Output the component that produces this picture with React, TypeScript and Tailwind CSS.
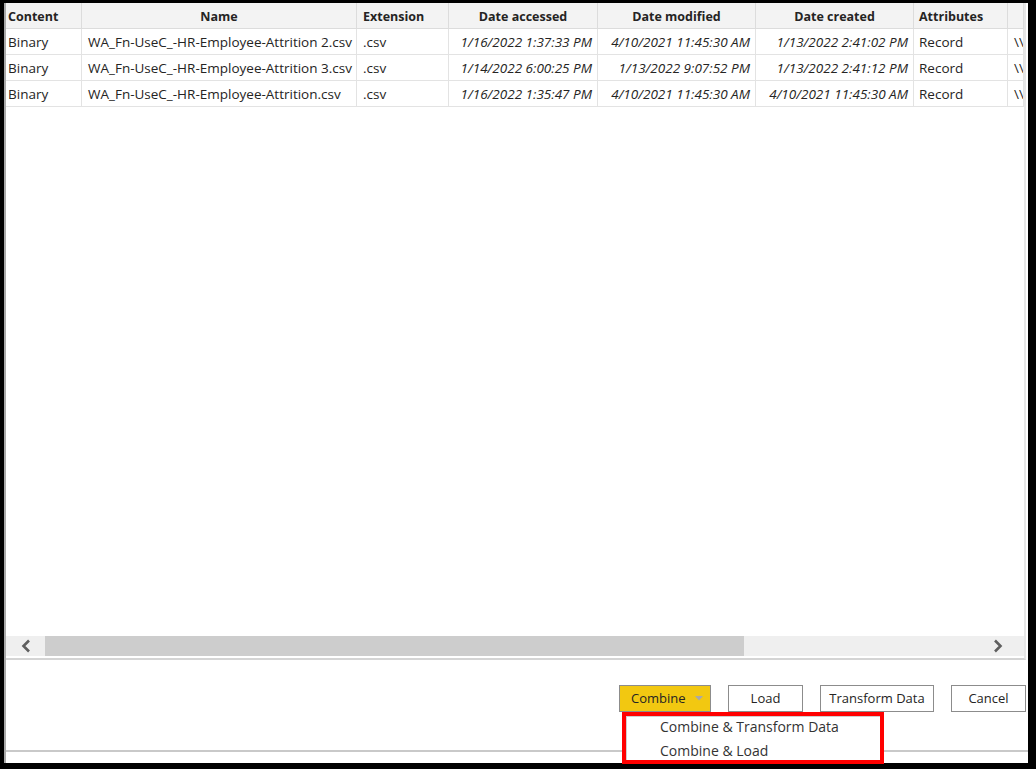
import React from "react";

const cols = [
  { w: "w-[76px]", label: "Content", head: "text-left pl-[2px]" },
  { w: "w-[275px]", label: "Name", head: "text-center" },
  { w: "w-[92px]", label: "Extension", head: "text-left pl-[6px]" },
  { w: "w-[149px]", label: "Date accessed", head: "text-center" },
  { w: "w-[158px]", label: "Date modified", head: "text-center" },
  { w: "w-[158px]", label: "Date created", head: "text-center" },
  { w: "w-[94px]", label: "Attributes", head: "text-left pl-[5px]" },
  { w: "w-[16px]", label: "", head: "" },
];

const rows = [
  ["Binary", "WA_Fn-UseC_-HR-Employee-Attrition 2.csv", ".csv", "1/16/2022 1:37:33 PM", "4/10/2021 11:45:30 AM", "1/13/2022 2:41:02 PM", "Record", "\\\\"],
  ["Binary", "WA_Fn-UseC_-HR-Employee-Attrition 3.csv", ".csv", "1/14/2022 6:00:25 PM", "1/13/2022 9:07:52 PM", "1/13/2022 2:41:12 PM", "Record", "\\\\"],
  ["Binary", "WA_Fn-UseC_-HR-Employee-Attrition.csv", ".csv", "1/16/2022 1:35:47 PM", "4/10/2021 11:45:30 AM", "4/10/2021 11:45:30 AM", "Record", "\\\\"],
];

const cellAlign = [
  "text-left pl-[2px]",
  "text-left pl-[6px]",
  "text-left pl-[6px]",
  "text-right pr-[5px] italic",
  "text-right pr-[5px] italic",
  "text-right pr-[5px] italic",
  "text-left pl-[5px]",
  "text-left pl-[6px]",
];

function Chevron({ dir }: { dir: "left" | "right" }) {
  return (
    <svg width="12" height="14" viewBox="0 0 12 14">
      <path
        d={dir === "left" ? "M9 1.5 L3.5 7 L9 12.5" : "M3 1.5 L8.5 7 L3 12.5"}
        fill="none"
        stroke="#5f5f5f"
        strokeWidth="2.6"
      />
    </svg>
  );
}

export default function App() {
  return (
    <div className="w-[1036px] h-[769px] bg-black pt-[3px] pl-[4px] pr-[8px] pb-[6px] font-['Open_Sans',sans-serif] text-[#252423]">
      <div className="h-full flex flex-col bg-white border-l-2 border-[#a9a9a9] relative">
        {/* data panel */}
        <div className="h-[657px] flex flex-col border-b-2 border-[#d4d4d4] border-r-2 border-r-[#e6e6e6] mr-[2px]">
          <div className="flex-1 overflow-hidden">
            <div className="flex h-[26px] bg-[#f3f3f3] border-b border-[#dcdcdc]">
              {cols.map((c, i) => (
                <div
                  key={i}
                  className={`${c.w} shrink-0 ${c.head} border-r border-[#dcdcdc] text-[12.5px] font-bold pt-[1px] leading-[25px] whitespace-nowrap overflow-hidden`}
                >
                  {c.label}
                </div>
              ))}
            </div>
            {rows.map((r, ri) => (
              <div key={ri} className="flex h-[26px] border-b border-[#e3e3e3]">
                {r.map((v, ci) => (
                  <div
                    key={ci}
                    className={`${cols[ci].w} shrink-0 ${cellAlign[ci]} border-r border-[#e3e3e3] text-[13.5px] pt-[1px] leading-[25px] whitespace-nowrap overflow-hidden`}
                  >
                    {v}
                  </div>
                ))}
              </div>
            ))}
          </div>
          {/* horizontal scrollbar */}
          <div className="h-[20px] mb-[2px] flex bg-[#efefef]">
            <div className="w-[39px] flex items-center justify-center">
              <Chevron dir="left" />
            </div>
            <div className="w-[699px] bg-[#cdcdcd]" />
            <div className="flex-1" />
            <div className="w-[52px] flex items-center justify-center">
              <Chevron dir="right" />
            </div>
          </div>
        </div>

        {/* buttons */}
        <div className="mt-[25px] flex justify-end gap-[17px] pr-[2px] text-[13px]">
          <div className="w-[92px] h-[27px] bg-[#f2c811] border border-[#8c8c8c] flex items-center pl-[11px] gap-[9px]">
            <span>Combine</span>
            <svg width="8" height="5" viewBox="0 0 8 5">
              <path d="M0 0 L8 0 L4 4.5 Z" fill="#a8a8a8" />
            </svg>
          </div>
          <div className="w-[75px] h-[27px] border border-[#8c8c8c] flex items-center justify-center">Load</div>
          <div className="w-[114px] h-[27px] border border-[#8c8c8c] flex items-center justify-center">Transform Data</div>
          <div className="w-[75px] h-[27px] border border-[#8c8c8c] flex items-center justify-center">Cancel</div>
        </div>

        <div className="flex-1" />
        <div className="h-[2px] bg-[#c9c9c9]" />
        <div className="h-[11px]" />

        {/* dropdown menu */}
        <div className="absolute left-[616px] top-[709px] w-[262px] h-[52px] border-4 border-[#ff0000] bg-white">
          <div className="h-full border-t border-l border-[#cfcfcf] pl-[33px] text-[14px] text-[#333] leading-[24px] -mt-[0px]">
            <div className="-mt-[2px]">Combine &amp; Transform Data</div>
            <div>Combine &amp; Load</div>
          </div>
        </div>
      </div>
    </div>
  );
}
